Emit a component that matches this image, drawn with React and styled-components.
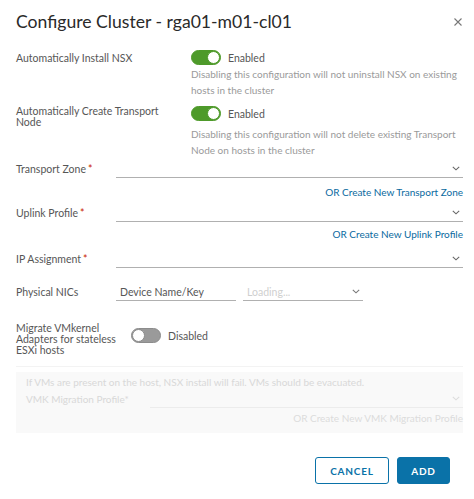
import React from "react";
import styled, { createGlobalStyle } from "styled-components";

const Global = createGlobalStyle`
  html, body { margin: 0; padding: 0; background: #fff; }
  body { font-family: Lato, "Open Sans", sans-serif; color: #565656; }
  * { box-sizing: border-box; }
`;

const Page = styled.div`
  width: 474px;
  height: 499px;
  padding: 9px 11px 0 16px;
  display: flex;
  flex-direction: column;
`;

const Header = styled.div`
  display: flex;
  align-items: center;
  justify-content: space-between;
  height: 26px;
`;

const Title = styled.h1`
  margin: 0;
  font-size: 17.6px;
  font-weight: 400;
  color: #2a2a2a;
  line-height: 26px;
`;

const Close = styled.button`
  border: 0;
  background: none;
  padding: 0;
  width: 10px;
  height: 10px;
  display: flex;
  align-items: center;
  justify-content: center;
  cursor: pointer;
`;

const Form = styled.div`
  display: flex;
  flex-direction: column;
`;

const SwitchRow = styled.div`
  display: grid;
  grid-template-columns: ${(p) => p.$labelWidth}px 1fr;
  margin-top: ${(p) => p.$top}px;
  align-items: start;
`;

const Label = styled.div`
  font-size: 10.5px;
  line-height: ${(p) => p.$lh || 12}px;
  color: #565656;
  padding-top: ${(p) => p.$pt || 0}px;
`;

const Req = styled.span`
  color: #c92100;
  margin-left: 2px;
`;

const SwitchCell = styled.div`
  display: flex;
  flex-direction: column;
  padding-top: ${(p) => p.$pt || 0}px;
`;

const SwitchLine = styled.div`
  display: flex;
  align-items: center;
  gap: 7px;
  height: 15px;
`;

const Track = styled.span`
  position: relative;
  width: 30px;
  height: 15px;
  border-radius: 8px;
  background: ${(p) => (p.$on ? "#4e9a2a" : "#9a9a9a")};
  border: 1px solid ${(p) => (p.$on ? "#4e9a2a" : "#8c8c8c")};
  flex: none;
`;

const Knob = styled.span`
  position: absolute;
  top: 0;
  ${(p) => (p.$on ? "right: 0;" : "left: 0;")}
  width: 13px;
  height: 13px;
  border-radius: 50%;
  background: #fff;
  border: 1px solid ${(p) => (p.$on ? "#4e9a2a" : "#8c8c8c")};
`;

const SwitchText = styled.span`
  font-size: 10.5px;
  color: #565656;
`;

const Help = styled.div`
  font-size: 10px;
  line-height: 16px;
  color: #9a9a9a;
  margin-top: ${(p) => p.$gap}px;
`;

const FieldRow = styled.div`
  display: grid;
  grid-template-columns: 100px 1fr;
  align-items: center;
  margin-top: ${(p) => p.$top}px;
`;

const SelectBox = styled.div`
  display: flex;
  align-items: center;
  justify-content: space-between;
  height: 18px;
  border-bottom: 1px solid ${(p) => (p.$faint ? "#ececec" : "#b0b0b0")};
  padding: 0 3px 0 4px;
  width: ${(p) => (p.$w ? p.$w + "px" : "auto")};
  font-size: 10.5px;
  color: ${(p) => (p.$muted ? "#cfcfcf" : "#565656")};
`;

const LinkRow = styled.div`
  display: flex;
  justify-content: flex-end;
  margin-top: ${(p) => p.$top}px;
`;

const Link = styled.a`
  font-size: 10px;
  color: ${(p) => (p.$disabled ? "#dcdcdc" : "#0a6aa0")};
  text-decoration: none;
  line-height: 12px;
`;

const NicControls = styled.div`
  display: flex;
  gap: 7px;
`;

const Panel = styled.div`
  margin-top: 10px;
  border-top: 1px solid #f3f3f3;
  padding-top: 5px;
`;

const PanelInner = styled.div`
  background: #f9f9f9;
  height: 61px;
  padding: 4px 0 0 10px;
  display: flex;
  flex-direction: column;
`;

const PanelText = styled.div`
  font-size: 10px;
  color: #d8d8d8;
  line-height: 12px;
`;

const PanelRow = styled.div`
  display: grid;
  grid-template-columns: 124px 1fr;
  align-items: center;
  margin-top: 2px;
`;

const Footer = styled.div`
  display: flex;
  justify-content: flex-end;
  gap: 8px;
  margin-top: 24px;
  padding-right: 13px;
`;

const Button = styled.button`
  height: 27px;
  padding: 0;
  width: ${(p) => p.$w}px;
  border-radius: 3px;
  font-family: Lato, "Open Sans", sans-serif;
  font-weight: 700;
  font-size: 10px;
  letter-spacing: 0.8px;
  text-transform: uppercase;
  border: 1px solid #0a72a8;
  background: ${(p) => (p.$primary ? "#0a72a8" : "#fff")};
  color: ${(p) => (p.$primary ? "#fff" : "#0a72a8")};
  cursor: pointer;
`;

const Chevron = ({ color = "#666" }) => (
  <svg width="8" height="5" viewBox="0 0 8 5">
    <path d="M0.8 0.8 L4 3.8 L7.2 0.8" fill="none" stroke={color} strokeWidth="1.1" />
  </svg>
);

const Toggle = ({ on, text }) => (
  <SwitchLine>
    <Track $on={on}>
      <Knob $on={on} />
    </Track>
    <SwitchText>{text}</SwitchText>
  </SwitchLine>
);

export default function App() {
  return (
    <>
      <Global />
      <Page>
        <Header>
          <Title>Configure Cluster - rga01-m01-cl01</Title>
          <Close aria-label="close">
            <svg width="8" height="8" viewBox="0 0 8 8">
              <path d="M0.5 0.5 L7.5 7.5 M7.5 0.5 L0.5 7.5" stroke="#777" strokeWidth="1.1" />
            </svg>
          </Close>
        </Header>
        <Form>
          <SwitchRow $labelWidth={175} $top={15}>
            <Label $pt={2}>Automatically Install NSX</Label>
            <SwitchCell>
              <Toggle on text="Enabled" />
              <Help $gap={1}>
                Disabling this configuration will not uninstall NSX on existing
                <br />
                hosts in the cluster
              </Help>
            </SwitchCell>
          </SwitchRow>
          <SwitchRow $labelWidth={175} $top={8}>
            <Label $lh={11} $pt={-2}>
              Automatically Create Transport
              <br />
              Node
            </Label>
            <SwitchCell>
              <Toggle on text="Enabled" />
              <Help $gap={5}>
                Disabling this configuration will not delete existing Transport
                <br />
                Node on hosts in the cluster
              </Help>
            </SwitchCell>
          </SwitchRow>

          <FieldRow $top={2}>
            <Label>
              Transport Zone<Req>*</Req>
            </Label>
            <SelectBox>
              <span />
              <Chevron />
            </SelectBox>
          </FieldRow>
          <LinkRow $top={8}>
            <Link href="#">OR Create New Transport Zone</Link>
          </LinkRow>

          <FieldRow $top={6}>
            <Label>
              Uplink Profile<Req>*</Req>
            </Label>
            <SelectBox>
              <span />
              <Chevron />
            </SelectBox>
          </FieldRow>
          <LinkRow $top={6}>
            <Link href="#">OR Create New Uplink Profile</Link>
          </LinkRow>

          <FieldRow $top={10}>
            <Label>
              IP Assignment<Req>*</Req>
            </Label>
            <SelectBox>
              <span />
              <Chevron />
            </SelectBox>
          </FieldRow>

          <FieldRow $top={15}>
            <Label>Physical NICs</Label>
            <NicControls>
              <SelectBox $w={120}>Device Name/Key</SelectBox>
              <SelectBox $w={120} $muted>
                <span>Loading...</span>
                <Chevron color="#777" />
              </SelectBox>
            </NicControls>
          </FieldRow>

          <SwitchRow $labelWidth={115} $top={22}>
            <Label $lh={11}>
              Migrate VMkernel
              <br />
              Adapters for stateless
              <br />
              ESXi hosts
            </Label>
            <SwitchCell $pt={5}>
              <Toggle text="Disabled" />
            </SwitchCell>
          </SwitchRow>

          <Panel>
            <PanelInner>
              <PanelText>If VMs are present on the host, NSX install will fail. VMs should be evacuated.</PanelText>
              <PanelRow>
                <PanelText>
                  VMK Migration Profile<span>*</span>
                </PanelText>
                <SelectBox $faint>
                  <span />
                  <Chevron color="#dcdcdc" />
                </SelectBox>
              </PanelRow>
              <LinkRow $top={4}>
                <Link $disabled>OR Create New VMK Migration Profile</Link>
              </LinkRow>
            </PanelInner>
          </Panel>
        </Form>
        <Footer>
          <Button $w={74}>Cancel</Button>
          <Button $w={53} $primary>
            Add
          </Button>
        </Footer>
      </Page>
    </>
  );
}
